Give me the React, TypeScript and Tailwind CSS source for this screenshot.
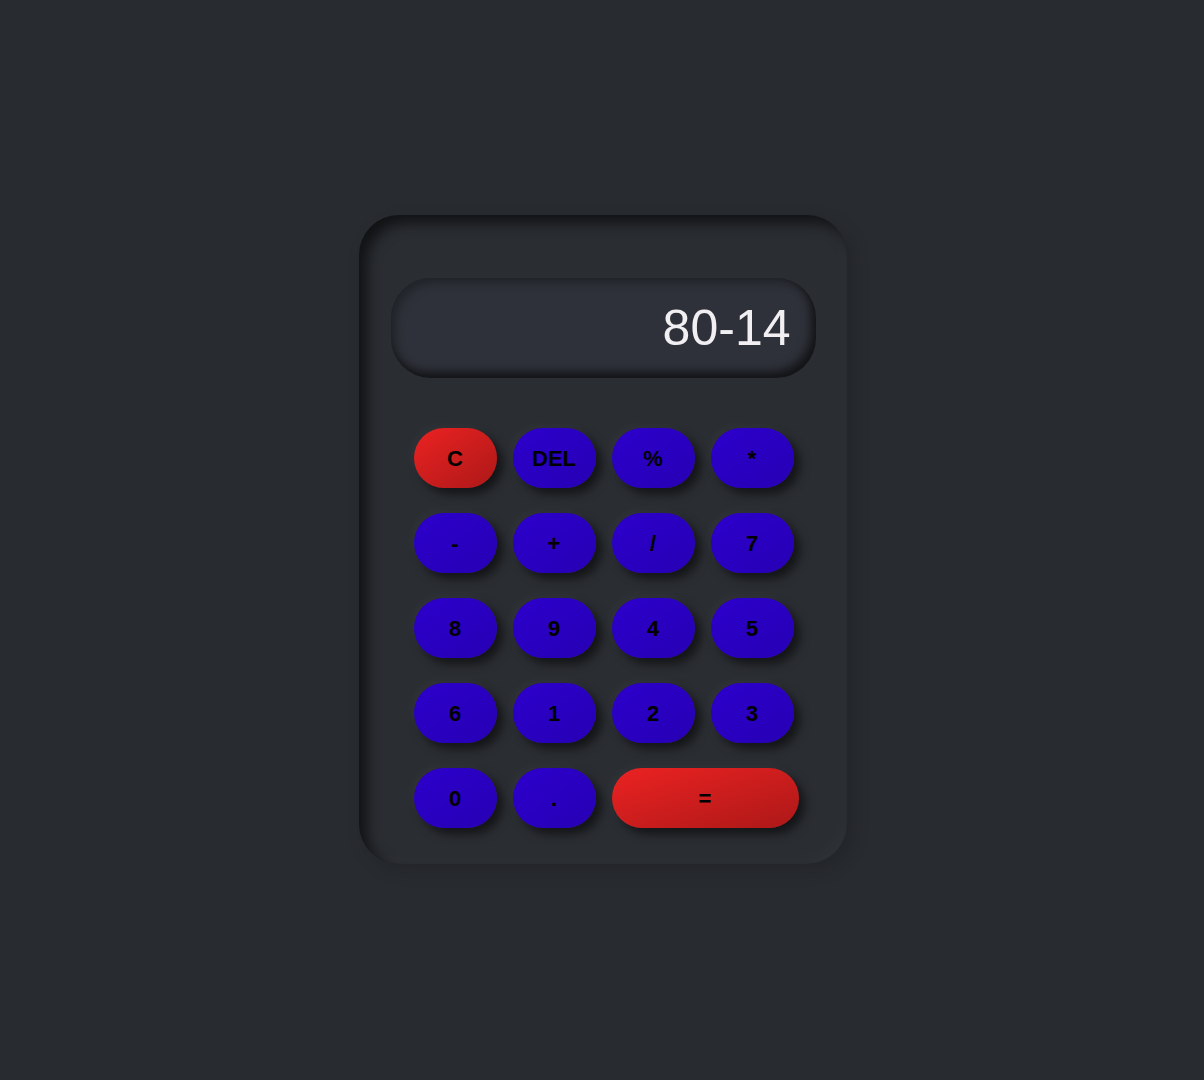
import React from "react";

type Key = { label: string; kind: "op" | "clear" | "equals" };

const keys: Key[] = [
  { label: "C", kind: "clear" },
  { label: "DEL", kind: "op" },
  { label: "%", kind: "op" },
  { label: "*", kind: "op" },
  { label: "-", kind: "op" },
  { label: "+", kind: "op" },
  { label: "/", kind: "op" },
  { label: "7", kind: "op" },
  { label: "8", kind: "op" },
  { label: "9", kind: "op" },
  { label: "4", kind: "op" },
  { label: "5", kind: "op" },
  { label: "6", kind: "op" },
  { label: "1", kind: "op" },
  { label: "2", kind: "op" },
  { label: "3", kind: "op" },
  { label: "0", kind: "op" },
  { label: ".", kind: "op" },
  { label: "=", kind: "equals" },
];

function CalcKey({ k }: { k: Key }) {
  const red = k.kind !== "op";
  const base =
    "h-[60px] rounded-[30px] flex items-center justify-center text-[22px] font-bold text-black shadow-[6px_6px_10px_rgba(0,0,0,0.55),-3px_-3px_8px_rgba(255,255,255,0.03)]";
  const color = red
    ? "bg-gradient-to-br from-[#ec2222] to-[#ad1818]"
    : "bg-gradient-to-br from-[#2d00cc] to-[#2600b4]";
  const width = k.kind === "equals" ? "w-[187px] col-span-2" : "w-[83px]";
  return (
    <button className={`${base} ${color} ${width}`} style={{ fontFamily: '"Liberation Sans", Arial, sans-serif' }}>
      {k.label}
    </button>
  );
}

export default function App() {
  return (
    <div className="min-h-[1080px] w-full bg-[#282b30] flex justify-center">
      <div className="mt-[215px] ml-[1px] w-[488px] h-[649px] rounded-[40px] bg-[#2a2d32] shadow-[inset_8px_8px_14px_rgba(0,0,0,0.6),inset_-6px_-6px_12px_rgba(255,255,255,0.025),6px_6px_18px_rgba(0,0,0,0.15)] pt-[63px] pl-[32px]">
        <div className="w-[425px] h-[100px] rounded-[40px] bg-[#2e3139] shadow-[inset_-5px_-6px_10px_rgba(0,0,0,0.6),inset_5px_5px_10px_rgba(0,0,0,0.25)] flex items-center justify-end pr-[25px]">
          <span
            className="text-[50px] text-[#f2eff2] leading-none"
            style={{ fontFamily: '"Liberation Sans", Arial, sans-serif' }}
          >
            80-14
          </span>
        </div>
        <div className="mt-[50px] ml-[23px] grid grid-cols-[83px_83px_83px_83px] gap-x-[16px] gap-y-[25px]">
          {keys.map((k) => (
            <CalcKey key={k.label} k={k} />
          ))}
        </div>
      </div>
    </div>
  );
}
